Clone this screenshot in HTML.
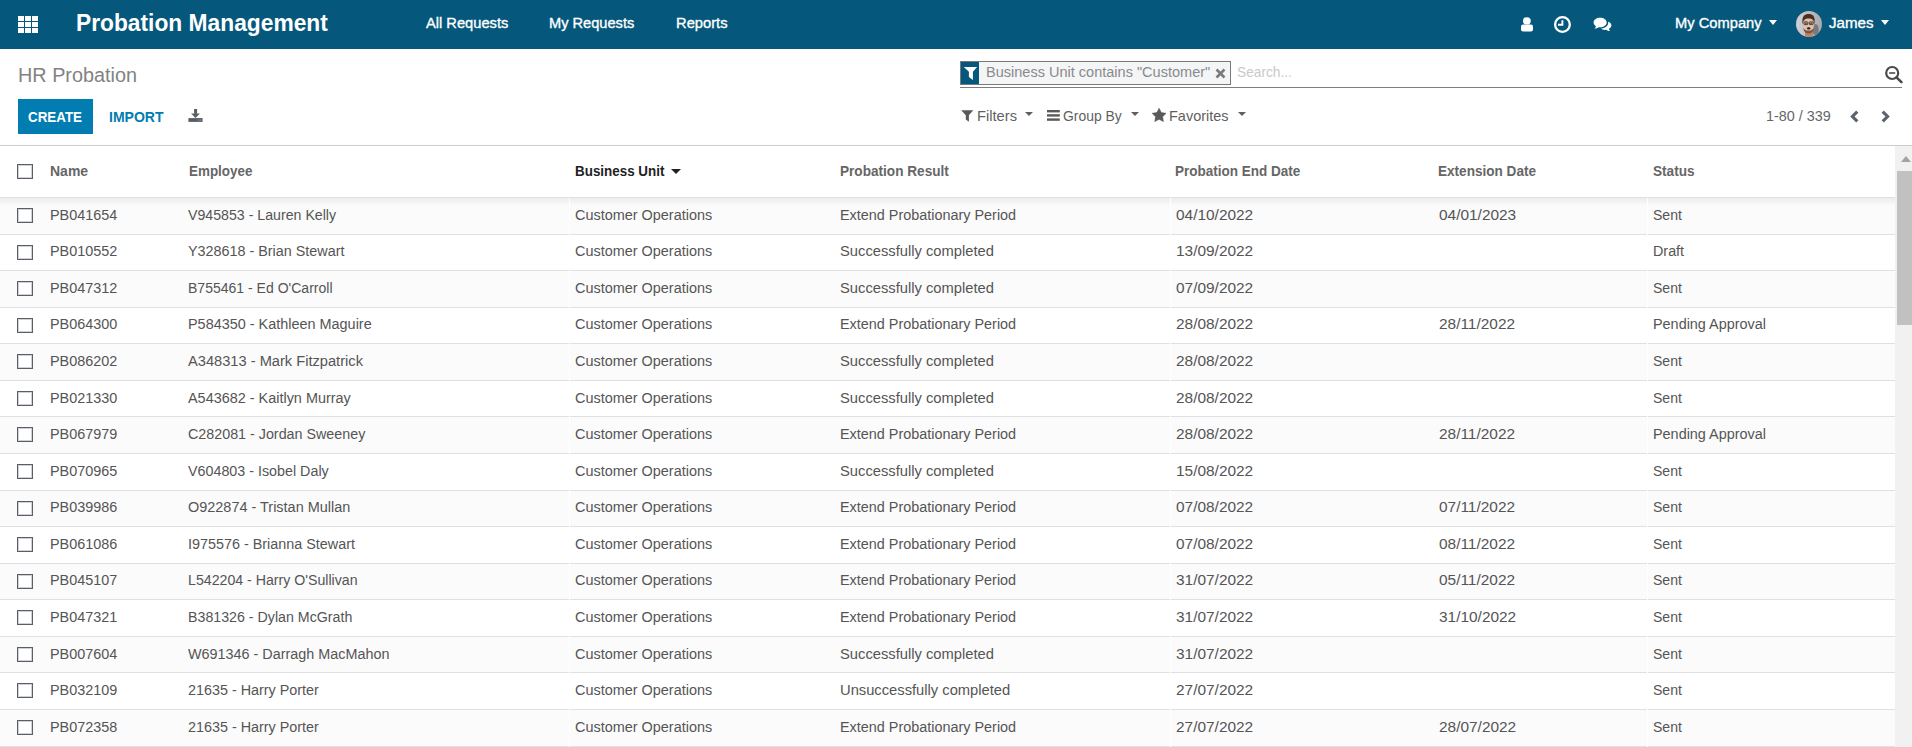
<!DOCTYPE html>
<html><head><meta charset="utf-8">
<style>
*{margin:0;padding:0;box-sizing:border-box}
html,body{width:1912px;height:747px;overflow:hidden;background:#fff;font-family:"Liberation Sans",sans-serif;position:relative}
.abs{position:absolute}
.nav{position:absolute;left:0;top:0;width:1912px;height:49px;background:#05587b}
.nav .t{position:absolute;color:#fff;white-space:nowrap;line-height:20px}
.brand{left:76px;top:10px;font-size:23px;font-weight:bold;line-height:28px!important;letter-spacing:-0.1px}
.menu{font-size:15px;top:13px;letter-spacing:-0.15px}
.caret-w{position:absolute;width:0;height:0;border-left:4.5px solid transparent;border-right:4.5px solid transparent;border-top:5.5px solid #fff}
.bc{position:absolute;left:18px;top:63px;font-size:19.5px;color:#8a8a8a;line-height:24px;white-space:nowrap}
.btn-create{position:absolute;left:18px;top:99px;width:75px;height:35px;background:#017db2;color:#fff;font-weight:bold;font-size:13.6px;line-height:35px;text-align:center;letter-spacing:0px}
.btn-import{position:absolute;left:109px;top:99px;height:35px;line-height:35px;color:#017db2;font-weight:bold;font-size:14px}
.cpline{position:absolute;left:0;top:145px;width:1912px;height:1px;background:#cccccc}
.facet{position:absolute;left:960px;top:61px;width:271px;height:24px;border:1px solid #7a7a7a;background:#f4f5f7}
.facet .ic{position:absolute;left:0;top:0;width:18px;height:22px;background:#05587b}
.facet .tx{position:absolute;left:24.6px;top:0;line-height:22px;font-size:14.5px;color:#8a8a8a;white-space:nowrap}
.search-ph{position:absolute;left:1237px;top:62px;line-height:22px;font-size:13.75px;color:#c9c9c9}
.sline{position:absolute;left:960px;top:87px;width:942px;height:1px;background:#7d7d7d}
.cp2{position:absolute;top:106px;line-height:20px;color:#5f5f5f;white-space:nowrap}
.caret-g{position:absolute;width:0;height:0;border-left:4px solid transparent;border-right:4px solid transparent;border-top:4px solid #5f5f5f}
.pager{position:absolute;left:1765.5px;top:106px;line-height:20px;font-size:14.5px;color:#666;white-space:nowrap}
.thead{position:absolute;left:0;top:146px;width:1895px;height:51px;background:#fff}
.h{position:absolute;top:161px;line-height:20px;font-size:14px;font-weight:bold;color:#6a6a6a;white-space:nowrap;letter-spacing:-0.3px}
.h.sorted{color:#222}
.caret-d{display:inline-block;margin-left:6px;vertical-align:middle;width:0;height:0;border-left:5px solid transparent;border-right:5px solid transparent;border-top:5px solid #222;position:relative;top:-1px}
.row{position:absolute;left:0;width:1895px;height:36.5714px;border-top:1px solid #dfdfe4;background:#fff}
.row.odd{background:#fbfbfb}
.row .c{position:absolute;top:0;line-height:35.57px;font-size:15px;color:#555;white-space:nowrap;letter-spacing:-0.28px}
.cb{position:absolute;left:17px;top:10px;width:16px;height:15px;border:1.7px solid #5e5e5e;background:#fff;box-shadow:inset 0 0 0 1px rgba(140,152,185,0.45)}
.hcb{position:absolute;left:17px;top:164px;width:16px;height:15px;border:1.7px solid #5e5e5e;background:#fff;box-shadow:inset 0 0 0 1px rgba(140,152,185,0.45)}
.sb{position:absolute;left:1895px;top:146px;width:17px;height:601px;background:#f1f1f1}
.sb .th{position:absolute;left:2px;top:25px;width:15px;height:154px;background:#c1c1c1}
.sb .ar{position:absolute;left:6px;top:10px;width:0;height:0;border-left:5.5px solid transparent;border-right:5.5px solid transparent;border-bottom:6px solid #a3a3a3}
.gap{position:absolute;top:198px;width:1px;height:549px;background:#fff}
.shadow{position:absolute;left:0;top:198px;width:1895px;height:8px;background:linear-gradient(rgba(0,0,0,0.06),rgba(0,0,0,0))}
.tx{position:absolute;white-space:nowrap;transform-origin:0 0;z-index:5}
</style></head><body>
<div class="nav">
  <svg class="abs" style="left:18px;top:16px" width="20" height="17" viewBox="0 0 20 17">
    <g fill="#fff">
      <rect x="0" y="0" width="6" height="5"/><rect x="7" y="0" width="6" height="5"/><rect x="14" y="0" width="6" height="5"/>
      <rect x="0" y="6" width="6" height="5"/><rect x="7" y="6" width="6" height="5"/><rect x="14" y="6" width="6" height="5"/>
      <rect x="0" y="12" width="6" height="5"/><rect x="7" y="12" width="6" height="5"/><rect x="14" y="12" width="6" height="5"/>
    </g>
  </svg>
  <!-- user icon -->
  <svg class="abs" style="left:1520px;top:17px" width="14" height="15" viewBox="0 0 14 15">
    <ellipse cx="6.9" cy="3.9" rx="3.9" ry="3.6" fill="#fff"/>
    <rect x="1" y="7.5" width="12" height="6.9" rx="2" fill="#fff"/>
  </svg>
  <!-- clock -->
  <svg class="abs" style="left:1553px;top:15px" width="19" height="19" viewBox="0 0 19 19">
    <circle cx="9.45" cy="9.5" r="7.35" fill="none" stroke="#fff" stroke-width="2.3"/>
    <path d="M9.4 5.2 V9.7 H5.0" fill="none" stroke="#fff" stroke-width="1.9"/>
  </svg>
  <!-- comments -->
  <svg class="abs" style="left:1593px;top:17px" width="19" height="14.3" viewBox="0 0 20 15">
    <path d="M7.5 0.8 C3.6 0.8 0.6 3 0.6 5.8 C0.6 7.4 1.6 8.8 3.2 9.7 C3 10.7 2.4 11.6 1.6 12.2 C3.4 12.2 5 11.5 6 10.7 C6.5 10.8 7 10.8 7.5 10.8 C11.4 10.8 14.4 8.6 14.4 5.8 C14.4 3 11.4 0.8 7.5 0.8Z" fill="#fff"/>
    <path d="M15.6 4.6 C15.9 5 16 5.4 16 5.9 C16 9.2 12.6 11.9 8.2 12.1 C9.2 13 10.8 13.6 12.5 13.6 C13 13.6 13.4 13.6 13.9 13.5 C14.9 14.3 16.4 14.9 18.2 14.9 C17.4 14.3 16.9 13.4 16.7 12.4 C18.3 11.6 19.4 10.2 19.4 8.6 C19.4 6.9 17.9 5.4 15.6 4.6Z" fill="#fff"/>
  </svg>
  <div class="caret-w" style="left:1768.5px;top:20px"></div>
  <!-- avatar -->
  <svg class="abs" style="left:1796px;top:11px" width="26" height="26" viewBox="0 0 26 26">
    <defs><clipPath id="av"><circle cx="13" cy="13" r="13"/></clipPath>
    <linearGradient id="avg" x1="0" x2="1" y1="0" y2="0"><stop offset="0" stop-color="#d2d2d6"/><stop offset="1" stop-color="#a9a9ad"/></linearGradient></defs>
    <g clip-path="url(#av)">
      <rect width="26" height="26" fill="url(#avg)"/>
      <ellipse cx="19.5" cy="18.5" rx="3.2" ry="5.5" fill="#4a4a4e" opacity="0.55"/>
      <rect x="9" y="21" width="8" height="6" fill="#b98565"/>
      <ellipse cx="12.5" cy="14.2" rx="5.4" ry="7.4" fill="#dfc0a8"/>
      <path d="M7.3 17 C7.8 21 10 22.3 12.6 22.3 C15.2 22.3 17.4 21 17.8 17 C16.5 19 15 19.6 12.6 19.6 C10.2 19.6 8.6 19 7.3 17Z" fill="#5d4032" opacity="0.8"/>
      <path d="M6.6 13.5 C5.4 5 8.8 3 12.6 3 C16.6 3 19.8 5 18.4 13.5 C18 9.5 16.6 7.6 12.6 7.6 C8.8 7.6 7.2 9.5 6.6 13.5Z" fill="#4a2f20"/>
      <rect x="7.9" y="10.9" width="3.9" height="2.7" rx="0.6" fill="none" stroke="#2b2220" stroke-width="0.8"/>
      <rect x="13.3" y="10.9" width="3.9" height="2.7" rx="0.6" fill="none" stroke="#2b2220" stroke-width="0.8"/>
      <ellipse cx="12.7" cy="17.4" rx="1.8" ry="1.1" fill="#3a1816"/><rect x="8.6" y="11.6" width="2.5" height="1.3" fill="#6b5048"/><rect x="14" y="11.6" width="2.5" height="1.3" fill="#6b5048"/>
    </g>
  </svg>
  <div class="caret-w" style="left:1880.5px;top:20px"></div>
</div>

<div class="btn-create"></div>
<svg class="abs" style="left:188px;top:109px" width="15" height="13" viewBox="0 0 15 13">
  <rect x="6.1" y="0" width="3" height="4.8" fill="#585d64"/>
  <path d="M3.1 4.5 H11.9 L7.5 8.9Z" fill="#585d64"/>
  <rect x="0.4" y="9.1" width="14.2" height="3.8" fill="#585d64"/>
  <rect x="10.5" y="10.6" width="1" height="1" fill="#aab"/><rect x="12.3" y="10.6" width="1" height="1" fill="#aab"/>
</svg>

<div class="facet"><div class="ic">
  <svg class="abs" style="left:2px;top:4px" width="16" height="15" viewBox="0 0 16 15">
    <path d="M0.8 1.0 H14.1 L9.9 5.7 V13.9 L5.9 10.9 V5.7Z" fill="#fff"/>
  </svg>
</div>
  <svg class="abs" style="left:254px;top:6px" width="11" height="11" viewBox="0 0 11 11">
    <path d="M1.5 1.5 L9.5 9.5 M9.5 1.5 L1.5 9.5" stroke="#7a7a7a" stroke-width="2.6"/>
  </svg>
</div>
<div class="sline"></div>
<svg class="abs" style="left:1884px;top:65px" width="19" height="19" viewBox="0 0 19 19">
  <circle cx="8.2" cy="8" r="6" fill="none" stroke="#4a4a4a" stroke-width="2.2"/>
  <path d="M12.5 12.3 L17.4 17.2" stroke="#4a4a4a" stroke-width="2.6" stroke-linecap="round"/>
  <path d="M5.2 8 H11.2" stroke="#4a4a4a" stroke-width="1.6"/>
</svg>

<!-- filters row -->
<svg class="abs" style="left:961px;top:110px" width="13" height="12" viewBox="0 0 13 12">
  <path d="M0.2 0.3 H12.3 L7.9 5.3 V11.8 L4.8 9.4 V5.3Z" fill="#5a5a5a"/>
</svg>
<div class="caret-g" style="left:1025px;top:112px"></div>
<svg class="abs" style="left:1047px;top:110px" width="13" height="11" viewBox="0 0 13 11">
  <rect x="0" y="0" width="12.8" height="2.4" fill="#5a5a5a"/><rect x="0" y="4.2" width="12.8" height="2.4" fill="#5a5a5a"/><rect x="0" y="8.4" width="12.8" height="2.4" fill="#5a5a5a"/>
</svg>
<div class="caret-g" style="left:1130.5px;top:112px"></div>
<svg class="abs" style="left:1152px;top:108px" width="15" height="15" viewBox="0 0 15 15">
  <path d="M7.10 0.30 L9.27 4.61 L14.04 5.34 L10.62 8.74 L11.39 13.51 L7.10 11.30 L2.81 13.51 L3.58 8.74 L0.16 5.34 L4.93 4.61Z" fill="#5a5a5a" stroke="#5a5a5a" stroke-width="0.6" stroke-linejoin="round"/>
</svg>
<div class="caret-g" style="left:1237.5px;top:112px"></div>

<svg class="abs" style="left:1849px;top:110px" width="11" height="13" viewBox="0 0 11 13">
  <path d="M8.3 1.6 L3.4 6.5 L8.3 11.4" fill="none" stroke="#5c636a" stroke-width="3.1"/>
</svg>
<svg class="abs" style="left:1880px;top:110px" width="11" height="13" viewBox="0 0 11 13">
  <path d="M2.7 1.6 L7.6 6.5 L2.7 11.4" fill="none" stroke="#5c636a" stroke-width="3.1"/>
</svg>

<div class="cpline"></div>

<div class="thead"></div>
<div class="hcb"></div>
<div class="caret-d" style="position:absolute;left:671px;top:169px;margin:0"></div>


<div class="row odd" style="top:197.000px"><span class="cb"></span></div>
<div class="row" style="top:233.571px"><span class="cb"></span></div>
<div class="row odd" style="top:270.143px"><span class="cb"></span></div>
<div class="row" style="top:306.714px"><span class="cb"></span></div>
<div class="row odd" style="top:343.286px"><span class="cb"></span></div>
<div class="row" style="top:379.857px"><span class="cb"></span></div>
<div class="row odd" style="top:416.428px"><span class="cb"></span></div>
<div class="row" style="top:453.000px"><span class="cb"></span></div>
<div class="row odd" style="top:489.571px"><span class="cb"></span></div>
<div class="row" style="top:526.143px"><span class="cb"></span></div>
<div class="row odd" style="top:562.714px"><span class="cb"></span></div>
<div class="row" style="top:599.285px"><span class="cb"></span></div>
<div class="row odd" style="top:635.857px"><span class="cb"></span></div>
<div class="row" style="top:672.428px"><span class="cb"></span></div>
<div class="row odd" style="top:709.000px"><span class="cb"></span></div>
<div class="row" style="top:745.571px"></div>
<div class="shadow"></div>
<div class="gap" style="left:569px"></div>
<div class="gap" style="left:1170px"></div>
<div class="gap" style="left:1647px"></div>

<span class="tx" style="left:76.40px;top:11.48px;font-size:24px;line-height:24px;font-weight:bold;color:#fff;transform:scaleX(0.9489);">Probation Management</span>
<span class="tx" style="left:425.90px;top:15.28px;font-size:15.5px;line-height:15.5px;color:#fff;transform:scaleX(0.9460);-webkit-text-stroke:0.35px #fff;">All Requests</span>
<span class="tx" style="left:548.90px;top:15.28px;font-size:15.5px;line-height:15.5px;color:#fff;transform:scaleX(0.9431);-webkit-text-stroke:0.35px #fff;">My Requests</span>
<span class="tx" style="left:676.10px;top:15.28px;font-size:15.5px;line-height:15.5px;color:#fff;transform:scaleX(0.9493);-webkit-text-stroke:0.35px #fff;">Reports</span>
<span class="tx" style="left:1675.00px;top:15.28px;font-size:15.5px;line-height:15.5px;color:#fff;transform:scaleX(0.9485);-webkit-text-stroke:0.35px #fff;">My Company</span>
<span class="tx" style="left:1828.80px;top:15.28px;font-size:15.5px;line-height:15.5px;color:#fff;transform:scaleX(0.9748);-webkit-text-stroke:0.35px #fff;">James</span>
<span class="tx" style="left:17.90px;top:64.65px;font-size:20.5px;line-height:20.5px;color:#828282;transform:scaleX(0.9671);">HR Probation</span>
<span class="tx" style="left:28.20px;top:108.96px;font-size:15.4px;line-height:15.4px;font-weight:bold;color:#fff;transform:scaleX(0.8689);">CREATE</span>
<span class="tx" style="left:109.20px;top:108.96px;font-size:15.4px;line-height:15.4px;font-weight:bold;color:#017db2;transform:scaleX(0.9115);">IMPORT</span>
<span class="tx" style="left:985.60px;top:63.78px;font-size:15.5px;line-height:15.5px;color:#8a8a8a;transform:scaleX(0.9369);">Business Unit contains &quot;Customer&quot;</span>
<span class="tx" style="left:1237.40px;top:64.63px;font-size:14.5px;line-height:14.5px;color:#c9c9c9;transform:scaleX(0.9457);">Search...</span>
<span class="tx" style="left:976.70px;top:107.90px;font-size:15px;line-height:15px;color:#5f5f5f;transform:scaleX(0.9792);">Filters</span>
<span class="tx" style="left:1063.30px;top:107.90px;font-size:15px;line-height:15px;color:#5f5f5f;transform:scaleX(0.9282);">Group By</span>
<span class="tx" style="left:1169.20px;top:107.90px;font-size:15px;line-height:15px;color:#5f5f5f;transform:scaleX(0.9660);">Favorites</span>
<span class="tx" style="left:1766.20px;top:107.90px;font-size:15px;line-height:15px;color:#666;transform:scaleX(0.9593);">1-80 / 339</span>
<span class="tx" style="left:50.00px;top:163.10px;font-size:15px;line-height:15px;font-weight:bold;color:#666;transform:scaleX(0.9327);">Name</span>
<span class="tx" style="left:188.70px;top:163.10px;font-size:15px;line-height:15px;font-weight:bold;color:#666;transform:scaleX(0.8948);">Employee</span>
<span class="tx" style="left:574.60px;top:163.10px;font-size:15px;line-height:15px;font-weight:bold;color:#222;transform:scaleX(0.8940);">Business Unit</span>
<span class="tx" style="left:839.90px;top:163.10px;font-size:15px;line-height:15px;font-weight:bold;color:#666;transform:scaleX(0.9067);">Probation Result</span>
<span class="tx" style="left:1175.30px;top:163.10px;font-size:15px;line-height:15px;font-weight:bold;color:#666;transform:scaleX(0.9005);">Probation End Date</span>
<span class="tx" style="left:1438.20px;top:163.10px;font-size:15px;line-height:15px;font-weight:bold;color:#666;transform:scaleX(0.9045);">Extension Date</span>
<span class="tx" style="left:1652.60px;top:163.10px;font-size:15px;line-height:15px;font-weight:bold;color:#666;transform:scaleX(0.9073);">Status</span>
<span class="tx" style="left:49.70px;top:206.78px;font-size:15.5px;line-height:15.5px;color:#555;transform:scaleX(0.9300);">PB041654</span>
<span class="tx" style="left:188.40px;top:206.78px;font-size:15.5px;line-height:15.5px;color:#555;transform:scaleX(0.9142);">V945853 - Lauren Kelly</span>
<span class="tx" style="left:574.90px;top:206.78px;font-size:15.5px;line-height:15.5px;color:#555;transform:scaleX(0.9314);">Customer Operations</span>
<span class="tx" style="left:839.90px;top:206.78px;font-size:15.5px;line-height:15.5px;color:#555;transform:scaleX(0.9290);">Extend Probationary Period</span>
<span class="tx" style="left:1175.70px;top:206.78px;font-size:15.5px;line-height:15.5px;color:#555;transform:scaleX(0.9950);">04/10/2022</span>
<span class="tx" style="left:1438.50px;top:206.78px;font-size:15.5px;line-height:15.5px;color:#555;transform:scaleX(0.9950);">04/01/2023</span>
<span class="tx" style="left:1653.00px;top:206.78px;font-size:15.5px;line-height:15.5px;color:#555;transform:scaleX(0.9060);">Sent</span>
<span class="tx" style="left:49.70px;top:243.35px;font-size:15.5px;line-height:15.5px;color:#555;transform:scaleX(0.9300);">PB010552</span>
<span class="tx" style="left:188.40px;top:243.35px;font-size:15.5px;line-height:15.5px;color:#555;transform:scaleX(0.9263);">Y328618 - Brian Stewart</span>
<span class="tx" style="left:574.90px;top:243.35px;font-size:15.5px;line-height:15.5px;color:#555;transform:scaleX(0.9314);">Customer Operations</span>
<span class="tx" style="left:839.90px;top:243.35px;font-size:15.5px;line-height:15.5px;color:#555;transform:scaleX(0.9503);">Successfully completed</span>
<span class="tx" style="left:1175.70px;top:243.35px;font-size:15.5px;line-height:15.5px;color:#555;transform:scaleX(0.9950);">13/09/2022</span>
<span class="tx" style="left:1653.00px;top:243.35px;font-size:15.5px;line-height:15.5px;color:#555;transform:scaleX(0.9256);">Draft</span>
<span class="tx" style="left:49.70px;top:279.92px;font-size:15.5px;line-height:15.5px;color:#555;transform:scaleX(0.9300);">PB047312</span>
<span class="tx" style="left:188.40px;top:279.92px;font-size:15.5px;line-height:15.5px;color:#555;transform:scaleX(0.9045);">B755461 - Ed O&#x27;Carroll</span>
<span class="tx" style="left:574.90px;top:279.92px;font-size:15.5px;line-height:15.5px;color:#555;transform:scaleX(0.9314);">Customer Operations</span>
<span class="tx" style="left:839.90px;top:279.92px;font-size:15.5px;line-height:15.5px;color:#555;transform:scaleX(0.9503);">Successfully completed</span>
<span class="tx" style="left:1175.70px;top:279.92px;font-size:15.5px;line-height:15.5px;color:#555;transform:scaleX(0.9950);">07/09/2022</span>
<span class="tx" style="left:1653.00px;top:279.92px;font-size:15.5px;line-height:15.5px;color:#555;transform:scaleX(0.9060);">Sent</span>
<span class="tx" style="left:49.70px;top:316.49px;font-size:15.5px;line-height:15.5px;color:#555;transform:scaleX(0.9300);">PB064300</span>
<span class="tx" style="left:188.40px;top:316.49px;font-size:15.5px;line-height:15.5px;color:#555;transform:scaleX(0.9308);">P584350 - Kathleen Maguire</span>
<span class="tx" style="left:574.90px;top:316.49px;font-size:15.5px;line-height:15.5px;color:#555;transform:scaleX(0.9314);">Customer Operations</span>
<span class="tx" style="left:839.90px;top:316.49px;font-size:15.5px;line-height:15.5px;color:#555;transform:scaleX(0.9290);">Extend Probationary Period</span>
<span class="tx" style="left:1175.70px;top:316.49px;font-size:15.5px;line-height:15.5px;color:#555;transform:scaleX(0.9950);">28/08/2022</span>
<span class="tx" style="left:1438.50px;top:316.49px;font-size:15.5px;line-height:15.5px;color:#555;transform:scaleX(0.9950);">28/11/2022</span>
<span class="tx" style="left:1653.00px;top:316.49px;font-size:15.5px;line-height:15.5px;color:#555;transform:scaleX(0.9292);">Pending Approval</span>
<span class="tx" style="left:49.70px;top:353.06px;font-size:15.5px;line-height:15.5px;color:#555;transform:scaleX(0.9300);">PB086202</span>
<span class="tx" style="left:188.40px;top:353.06px;font-size:15.5px;line-height:15.5px;color:#555;transform:scaleX(0.9447);">A348313 - Mark Fitzpatrick</span>
<span class="tx" style="left:574.90px;top:353.06px;font-size:15.5px;line-height:15.5px;color:#555;transform:scaleX(0.9314);">Customer Operations</span>
<span class="tx" style="left:839.90px;top:353.06px;font-size:15.5px;line-height:15.5px;color:#555;transform:scaleX(0.9503);">Successfully completed</span>
<span class="tx" style="left:1175.70px;top:353.06px;font-size:15.5px;line-height:15.5px;color:#555;transform:scaleX(0.9950);">28/08/2022</span>
<span class="tx" style="left:1653.00px;top:353.06px;font-size:15.5px;line-height:15.5px;color:#555;transform:scaleX(0.9060);">Sent</span>
<span class="tx" style="left:49.70px;top:389.64px;font-size:15.5px;line-height:15.5px;color:#555;transform:scaleX(0.9300);">PB021330</span>
<span class="tx" style="left:188.40px;top:389.64px;font-size:15.5px;line-height:15.5px;color:#555;transform:scaleX(0.9308);">A543682 - Kaitlyn Murray</span>
<span class="tx" style="left:574.90px;top:389.64px;font-size:15.5px;line-height:15.5px;color:#555;transform:scaleX(0.9314);">Customer Operations</span>
<span class="tx" style="left:839.90px;top:389.64px;font-size:15.5px;line-height:15.5px;color:#555;transform:scaleX(0.9503);">Successfully completed</span>
<span class="tx" style="left:1175.70px;top:389.64px;font-size:15.5px;line-height:15.5px;color:#555;transform:scaleX(0.9950);">28/08/2022</span>
<span class="tx" style="left:1653.00px;top:389.64px;font-size:15.5px;line-height:15.5px;color:#555;transform:scaleX(0.9060);">Sent</span>
<span class="tx" style="left:49.70px;top:426.21px;font-size:15.5px;line-height:15.5px;color:#555;transform:scaleX(0.9300);">PB067979</span>
<span class="tx" style="left:188.40px;top:426.21px;font-size:15.5px;line-height:15.5px;color:#555;transform:scaleX(0.9227);">C282081 - Jordan Sweeney</span>
<span class="tx" style="left:574.90px;top:426.21px;font-size:15.5px;line-height:15.5px;color:#555;transform:scaleX(0.9314);">Customer Operations</span>
<span class="tx" style="left:839.90px;top:426.21px;font-size:15.5px;line-height:15.5px;color:#555;transform:scaleX(0.9290);">Extend Probationary Period</span>
<span class="tx" style="left:1175.70px;top:426.21px;font-size:15.5px;line-height:15.5px;color:#555;transform:scaleX(0.9950);">28/08/2022</span>
<span class="tx" style="left:1438.50px;top:426.21px;font-size:15.5px;line-height:15.5px;color:#555;transform:scaleX(0.9950);">28/11/2022</span>
<span class="tx" style="left:1653.00px;top:426.21px;font-size:15.5px;line-height:15.5px;color:#555;transform:scaleX(0.9292);">Pending Approval</span>
<span class="tx" style="left:49.70px;top:462.78px;font-size:15.5px;line-height:15.5px;color:#555;transform:scaleX(0.9300);">PB070965</span>
<span class="tx" style="left:188.40px;top:462.78px;font-size:15.5px;line-height:15.5px;color:#555;transform:scaleX(0.9226);">V604803 - Isobel Daly</span>
<span class="tx" style="left:574.90px;top:462.78px;font-size:15.5px;line-height:15.5px;color:#555;transform:scaleX(0.9314);">Customer Operations</span>
<span class="tx" style="left:839.90px;top:462.78px;font-size:15.5px;line-height:15.5px;color:#555;transform:scaleX(0.9503);">Successfully completed</span>
<span class="tx" style="left:1175.70px;top:462.78px;font-size:15.5px;line-height:15.5px;color:#555;transform:scaleX(0.9950);">15/08/2022</span>
<span class="tx" style="left:1653.00px;top:462.78px;font-size:15.5px;line-height:15.5px;color:#555;transform:scaleX(0.9060);">Sent</span>
<span class="tx" style="left:49.70px;top:499.35px;font-size:15.5px;line-height:15.5px;color:#555;transform:scaleX(0.9300);">PB039986</span>
<span class="tx" style="left:188.40px;top:499.35px;font-size:15.5px;line-height:15.5px;color:#555;transform:scaleX(0.9325);">O922874 - Tristan Mullan</span>
<span class="tx" style="left:574.90px;top:499.35px;font-size:15.5px;line-height:15.5px;color:#555;transform:scaleX(0.9314);">Customer Operations</span>
<span class="tx" style="left:839.90px;top:499.35px;font-size:15.5px;line-height:15.5px;color:#555;transform:scaleX(0.9290);">Extend Probationary Period</span>
<span class="tx" style="left:1175.70px;top:499.35px;font-size:15.5px;line-height:15.5px;color:#555;transform:scaleX(0.9950);">07/08/2022</span>
<span class="tx" style="left:1438.50px;top:499.35px;font-size:15.5px;line-height:15.5px;color:#555;transform:scaleX(0.9950);">07/11/2022</span>
<span class="tx" style="left:1653.00px;top:499.35px;font-size:15.5px;line-height:15.5px;color:#555;transform:scaleX(0.9060);">Sent</span>
<span class="tx" style="left:49.70px;top:535.92px;font-size:15.5px;line-height:15.5px;color:#555;transform:scaleX(0.9300);">PB061086</span>
<span class="tx" style="left:188.40px;top:535.92px;font-size:15.5px;line-height:15.5px;color:#555;transform:scaleX(0.9273);">I975576 - Brianna Stewart</span>
<span class="tx" style="left:574.90px;top:535.92px;font-size:15.5px;line-height:15.5px;color:#555;transform:scaleX(0.9314);">Customer Operations</span>
<span class="tx" style="left:839.90px;top:535.92px;font-size:15.5px;line-height:15.5px;color:#555;transform:scaleX(0.9290);">Extend Probationary Period</span>
<span class="tx" style="left:1175.70px;top:535.92px;font-size:15.5px;line-height:15.5px;color:#555;transform:scaleX(0.9950);">07/08/2022</span>
<span class="tx" style="left:1438.50px;top:535.92px;font-size:15.5px;line-height:15.5px;color:#555;transform:scaleX(0.9950);">08/11/2022</span>
<span class="tx" style="left:1653.00px;top:535.92px;font-size:15.5px;line-height:15.5px;color:#555;transform:scaleX(0.9060);">Sent</span>
<span class="tx" style="left:49.70px;top:572.49px;font-size:15.5px;line-height:15.5px;color:#555;transform:scaleX(0.9300);">PB045107</span>
<span class="tx" style="left:188.40px;top:572.49px;font-size:15.5px;line-height:15.5px;color:#555;transform:scaleX(0.9138);">L542204 - Harry O&#x27;Sullivan</span>
<span class="tx" style="left:574.90px;top:572.49px;font-size:15.5px;line-height:15.5px;color:#555;transform:scaleX(0.9314);">Customer Operations</span>
<span class="tx" style="left:839.90px;top:572.49px;font-size:15.5px;line-height:15.5px;color:#555;transform:scaleX(0.9290);">Extend Probationary Period</span>
<span class="tx" style="left:1175.70px;top:572.49px;font-size:15.5px;line-height:15.5px;color:#555;transform:scaleX(0.9950);">31/07/2022</span>
<span class="tx" style="left:1438.50px;top:572.49px;font-size:15.5px;line-height:15.5px;color:#555;transform:scaleX(0.9950);">05/11/2022</span>
<span class="tx" style="left:1653.00px;top:572.49px;font-size:15.5px;line-height:15.5px;color:#555;transform:scaleX(0.9060);">Sent</span>
<span class="tx" style="left:49.70px;top:609.06px;font-size:15.5px;line-height:15.5px;color:#555;transform:scaleX(0.9300);">PB047321</span>
<span class="tx" style="left:188.40px;top:609.06px;font-size:15.5px;line-height:15.5px;color:#555;transform:scaleX(0.9169);">B381326 - Dylan McGrath</span>
<span class="tx" style="left:574.90px;top:609.06px;font-size:15.5px;line-height:15.5px;color:#555;transform:scaleX(0.9314);">Customer Operations</span>
<span class="tx" style="left:839.90px;top:609.06px;font-size:15.5px;line-height:15.5px;color:#555;transform:scaleX(0.9290);">Extend Probationary Period</span>
<span class="tx" style="left:1175.70px;top:609.06px;font-size:15.5px;line-height:15.5px;color:#555;transform:scaleX(0.9950);">31/07/2022</span>
<span class="tx" style="left:1438.50px;top:609.06px;font-size:15.5px;line-height:15.5px;color:#555;transform:scaleX(0.9950);">31/10/2022</span>
<span class="tx" style="left:1653.00px;top:609.06px;font-size:15.5px;line-height:15.5px;color:#555;transform:scaleX(0.9060);">Sent</span>
<span class="tx" style="left:49.70px;top:645.64px;font-size:15.5px;line-height:15.5px;color:#555;transform:scaleX(0.9300);">PB007604</span>
<span class="tx" style="left:188.40px;top:645.64px;font-size:15.5px;line-height:15.5px;color:#555;transform:scaleX(0.9277);">W691346 - Darragh MacMahon</span>
<span class="tx" style="left:574.90px;top:645.64px;font-size:15.5px;line-height:15.5px;color:#555;transform:scaleX(0.9314);">Customer Operations</span>
<span class="tx" style="left:839.90px;top:645.64px;font-size:15.5px;line-height:15.5px;color:#555;transform:scaleX(0.9503);">Successfully completed</span>
<span class="tx" style="left:1175.70px;top:645.64px;font-size:15.5px;line-height:15.5px;color:#555;transform:scaleX(0.9950);">31/07/2022</span>
<span class="tx" style="left:1653.00px;top:645.64px;font-size:15.5px;line-height:15.5px;color:#555;transform:scaleX(0.9060);">Sent</span>
<span class="tx" style="left:49.70px;top:682.21px;font-size:15.5px;line-height:15.5px;color:#555;transform:scaleX(0.9300);">PB032109</span>
<span class="tx" style="left:188.40px;top:682.21px;font-size:15.5px;line-height:15.5px;color:#555;transform:scaleX(0.9257);">21635 - Harry Porter</span>
<span class="tx" style="left:574.90px;top:682.21px;font-size:15.5px;line-height:15.5px;color:#555;transform:scaleX(0.9314);">Customer Operations</span>
<span class="tx" style="left:839.90px;top:682.21px;font-size:15.5px;line-height:15.5px;color:#555;transform:scaleX(0.9498);">Unsuccessfully completed</span>
<span class="tx" style="left:1175.70px;top:682.21px;font-size:15.5px;line-height:15.5px;color:#555;transform:scaleX(0.9950);">27/07/2022</span>
<span class="tx" style="left:1653.00px;top:682.21px;font-size:15.5px;line-height:15.5px;color:#555;transform:scaleX(0.9060);">Sent</span>
<span class="tx" style="left:49.70px;top:718.78px;font-size:15.5px;line-height:15.5px;color:#555;transform:scaleX(0.9300);">PB072358</span>
<span class="tx" style="left:188.40px;top:718.78px;font-size:15.5px;line-height:15.5px;color:#555;transform:scaleX(0.9257);">21635 - Harry Porter</span>
<span class="tx" style="left:574.90px;top:718.78px;font-size:15.5px;line-height:15.5px;color:#555;transform:scaleX(0.9314);">Customer Operations</span>
<span class="tx" style="left:839.90px;top:718.78px;font-size:15.5px;line-height:15.5px;color:#555;transform:scaleX(0.9290);">Extend Probationary Period</span>
<span class="tx" style="left:1175.70px;top:718.78px;font-size:15.5px;line-height:15.5px;color:#555;transform:scaleX(0.9950);">27/07/2022</span>
<span class="tx" style="left:1438.50px;top:718.78px;font-size:15.5px;line-height:15.5px;color:#555;transform:scaleX(0.9950);">28/07/2022</span>
<span class="tx" style="left:1653.00px;top:718.78px;font-size:15.5px;line-height:15.5px;color:#555;transform:scaleX(0.9060);">Sent</span>
<div class="sb"><div class="ar"></div><div class="th"></div></div>
</body></html>
